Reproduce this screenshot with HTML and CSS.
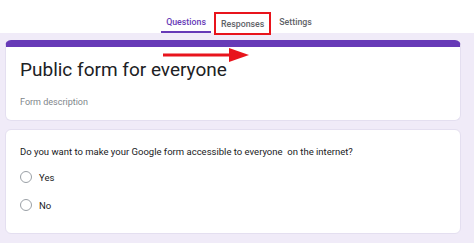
FILE: index.html
```html
<!DOCTYPE html>
<html lang="en">
<head>
    <meta charset="UTF-8">
    <title>Public form for everyone</title>
    <link rel="stylesheet" href="styles.css">
</head>
<body>
    <div class="tabs">
        <div class="tab active">Questions</div>
        <div class="tab marked">Responses</div>
        <div class="tab">Settings</div>
    </div>

    <div class="main">
        <div class="card title-card">
            <h1>Public form for everyone</h1>
            <div class="description">Form description</div>
        </div>

        <div class="card question">
            <div class="question-text">Do you want to make your Google form accessible to everyone&nbsp; on the internet?</div>
            <div class="option"><span class="radio"></span>Yes</div>
            <div class="option"><span class="radio"></span>No</div>
        </div>
    </div>

    <!-- flecha roja de la captura -->
    <div class="arrow">
        <svg width="86" height="14" viewBox="0 0 86 14">
            <rect x="0" y="5.5" width="70" height="3" fill="#e8141c"/>
            <polygon points="66,0 86,7 66,14" fill="#e8141c"/>
        </svg>
    </div>
</body>
</html>
```

FILE: styles.css
```css
body {
    margin: 0;
    background-color: #f0ebf8;
    font-family: Roboto, "Liberation Sans", sans-serif;
    position: relative;
    height: 243px;
    overflow: hidden;
}
.tabs {
    background-color: white;
    height: 33px;
    display: flex;
    justify-content: center;
    align-items: flex-end;
    gap: 3px;
    padding-left: 4px;
}
.tab {
    font-size: 8.8px;
    font-weight: 500;
    color: #5f6368;
    padding: 0 5px;
    height: 22px;
    line-height: 22px;
    box-sizing: border-box;
}
.tab.active {
    color: #673ab7;
    border-bottom: 2px solid #673ab7;
}
.tab.marked {
    border: 2px solid #e8141c;
    height: 23px;
    margin-bottom: -2px;
    line-height: 20px;
    padding: 0 5px;
}
.main {
    padding: 7px 13px 0 5px;
    display: flex;
    flex-direction: column;
    gap: 8px;
}
.card {
    background-color: white;
    border-radius: 6px;
    border: 1px solid #e4dff0;
}
.title-card {
    border-top: 7px solid #673ab7;
    padding: 0 14px;
    box-sizing: border-box;
    height: 81px;
}
.title-card h1 {
    margin: 11px 0 0;
    font-size: 19px;
    font-weight: 400;
    color: #202124;
}
.description {
    margin-top: 16px;
    font-size: 9px;
    color: #80868b;
}
.question {
    height: 105px;
    box-sizing: border-box;
    padding: 16px 14px 0;
}
.question-text {
    font-size: 9.5px;
    color: #202124;
    margin-bottom: 6px;
}
.option {
    display: flex;
    align-items: center;
    height: 28px;
    font-size: 9.5px;
    color: #202124;
}
.radio {
    width: 10px;
    height: 10px;
    border: 1px solid #9aa0a6;
    border-radius: 50%;
    margin-right: 7px;
}
.arrow {
    position: absolute;
    left: 163px;
    top: 48px;
    line-height: 0;
}
```
